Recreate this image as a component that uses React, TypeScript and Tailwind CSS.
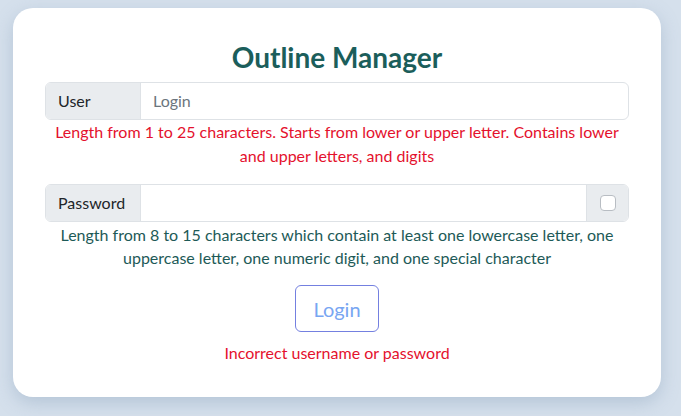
import { useState } from 'react';

export default function App() {
  const [user, setUser] = useState('');
  const [password, setPassword] = useState('');
  const [show, setShow] = useState(false);

  return (
    <div className="w-[681px] h-[416px] bg-[#d5e0ec] pt-[8px] pl-[13px] font-['Lato','Liberation_Sans',sans-serif] overflow-hidden">
      <div className="w-[648px] h-[389px] bg-white rounded-[20px] shadow-[0_6px_18px_rgba(120,145,175,0.35)] px-8 pt-[34px] flex flex-col items-stretch">
        <h1 className="text-center text-[28px] leading-[31px] font-bold text-[#1b5e5b]">Outline Manager</h1>

        <div className="mt-[9px] flex h-[38px] border border-[#dee2e6] rounded-[6px] overflow-hidden">
          <span className="w-[95px] shrink-0 bg-[#e9ecef] border-r border-[#dee2e6] flex items-center px-3 text-[16px] text-[#212529]">User</span>
          <input
            value={user}
            onChange={e => setUser(e.target.value)}
            placeholder="Login"
            className="flex-1 px-3 text-[16px] text-[#212529] placeholder:text-[#6c757d] outline-none"
          />
        </div>
        <p className="text-center text-[16px] leading-[24px] text-[#e4112d]">
          Length from 1 to 25 characters. Starts from lower or upper letter. Contains lower and upper letters, and digits
        </p>

        <div className="mt-[16px] flex h-[38px] border border-[#dee2e6] rounded-[6px] overflow-hidden">
          <span className="w-[95px] shrink-0 bg-[#e9ecef] border-r border-[#dee2e6] flex items-center px-3 text-[16px] text-[#212529]">Password</span>
          <input
            type={show ? 'text' : 'password'}
            value={password}
            onChange={e => setPassword(e.target.value)}
            className="flex-1 px-3 text-[16px] text-[#212529] outline-none"
          />
          <span className="w-[42px] shrink-0 bg-[#e9ecef] border-l border-[#dee2e6] flex items-center justify-center">
            <input
              type="checkbox"
              checked={show}
              onChange={e => setShow(e.target.checked)}
              className="appearance-none w-4 h-4 rounded-[4px] border border-[#b8bdc3] bg-white"
            />
          </span>
        </div>
        <p className="mt-[1px] text-center text-[16px] leading-[23px] text-[#1d5a57]">
          Length from 8 to 15 characters which contain at least one lowercase letter, one uppercase letter, one numeric digit, and one special character
        </p>

        <div className="mt-[16px] flex justify-center">
          <button className="h-[47px] w-[84px] border border-[#7480e0] rounded-[6px] text-[20px] text-[#78a6f2] bg-white">
            Login
          </button>
        </div>
        <p className="mt-[9px] text-center text-[16px] leading-[24px] text-[#e4112d]">Incorrect username or password</p>
      </div>
    </div>
  );
}
